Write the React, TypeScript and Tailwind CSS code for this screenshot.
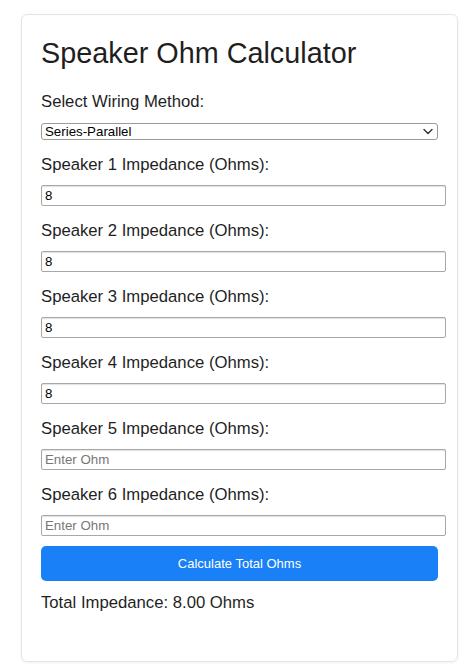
import React from 'react'

const speakers = ['8', '8', '8', '8', '', '']

export default function App() {
  return (
    <div
      className="min-h-[665px] bg-white px-[21px] pt-[14px]"
      style={{ fontFamily: '"Liberation Sans", Arial, sans-serif' }}
    >
      <div className="h-[648px] w-[437px] rounded-[6px] border border-[#e4e4e4] px-[19px] pt-[22px] shadow-[0_1px_3px_rgba(0,0,0,0.06)]">
        {/* Title */}
        <h2 className="text-[28.8px] leading-[33px] text-[#1f1f1f]">Speaker Ohm Calculator</h2>

        {/* Wiring method */}
        <label className="mt-[22px] block text-[16.7px] leading-[19px] text-[#1f1f1f]">
          Select Wiring Method:
        </label>
        <div className="relative mt-[12px] h-[17px] w-[397px]">
          <select
            defaultValue="series-parallel"
            className="block h-[17px] w-full appearance-none rounded-[3px] border border-[#9a9a9a] bg-white py-0 pl-[3px] text-[13.3px] leading-[15px] text-black"
          >
            <option value="series">Series</option>
            <option value="parallel">Parallel</option>
            <option value="series-parallel">Series-Parallel</option>
          </select>
          <svg
            className="pointer-events-none absolute right-[5px] top-[5px]"
            width="10"
            height="7"
            viewBox="0 0 10 7"
            fill="none"
          >
            <path d="M1 1.5l4 4 4-4" stroke="#333" strokeWidth="1.4" strokeLinecap="round" strokeLinejoin="round" />
          </svg>
        </div>

        {/* Speaker inputs */}
        <div className="mt-[15px] flex flex-col gap-[15px]">
          {speakers.map((value, i) => (
            <div key={i} className="flex flex-col gap-[11px]">
              <label className="block text-[16.7px] leading-[19px] text-[#1f1f1f]">
                Speaker {i + 1} Impedance (Ohms):
              </label>
              <input
                type="text"
                defaultValue={value}
                placeholder="Enter Ohm"
                className="h-[21px] w-[405px] rounded-[2px] border border-[#a8a8a8] px-[3px] text-[13.3px] leading-[15px] text-black shadow-[inset_0_1px_1px_rgba(0,0,0,0.12)] placeholder:text-[#777]"
              />
            </div>
          ))}
        </div>

        {/* Action */}
        <button className="mt-[10px] h-[35px] w-[397px] rounded-[5px] bg-[#1a80f8] text-[13px] text-white">
          Calculate Total Ohms
        </button>

        <p className="mt-[12px] text-[16.7px] leading-[19px] text-[#1f1f1f]">Total Impedance: 8.00 Ohms</p>
      </div>
    </div>
  )
}
